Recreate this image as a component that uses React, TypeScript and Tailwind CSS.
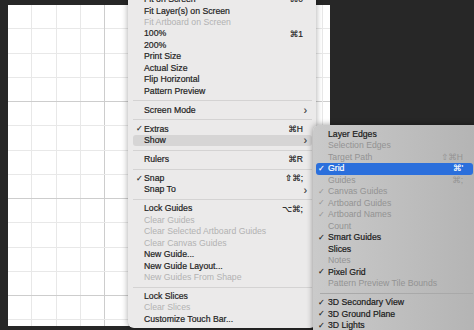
import React from "react";

type Item = {
    label: string;
    shortcut?: string;
    checked?: boolean;
    disabled?: boolean;
    submenu?: boolean;
    active?: boolean;
};

type Entry = Item | "sep";

const mainItems: Entry[] = [
    { label: "Fit on Screen", shortcut: "⌘0" },
    { label: "Fit Layer(s) on Screen" },
    { label: "Fit Artboard on Screen", disabled: true },
    { label: "100%", shortcut: "⌘1" },
    { label: "200%" },
    { label: "Print Size" },
    { label: "Actual Size" },
    { label: "Flip Horizontal" },
    { label: "Pattern Preview" },
    "sep",
    { label: "Screen Mode", submenu: true },
    "sep",
    { label: "Extras", shortcut: "⌘H", checked: true },
    { label: "Show", submenu: true, active: true },
    "sep",
    { label: "Rulers", shortcut: "⌘R" },
    "sep",
    { label: "Snap", shortcut: "⇧⌘;", checked: true },
    { label: "Snap To", submenu: true },
    "sep",
    { label: "Lock Guides", shortcut: "⌥⌘;" },
    { label: "Clear Guides", disabled: true },
    { label: "Clear Selected Artboard Guides", disabled: true },
    { label: "Clear Canvas Guides", disabled: true },
    { label: "New Guide..." },
    { label: "New Guide Layout..." },
    { label: "New Guides From Shape", disabled: true },
    "sep",
    { label: "Lock Slices" },
    { label: "Clear Slices", disabled: true },
    { label: "Customize Touch Bar..." },
];

const showItems: Entry[] = [
    { label: "Layer Edges" },
    { label: "Selection Edges", disabled: true },
    { label: "Target Path", shortcut: "⇧⌘H", disabled: true },
    { label: "Grid", shortcut: "⌘'", checked: true, active: true },
    { label: "Guides", shortcut: "⌘;", disabled: true },
    { label: "Canvas Guides", checked: true, disabled: true },
    { label: "Artboard Guides", checked: true, disabled: true },
    { label: "Artboard Names", checked: true, disabled: true },
    { label: "Count", disabled: true },
    { label: "Smart Guides", checked: true },
    { label: "Slices" },
    { label: "Notes", disabled: true },
    { label: "Pixel Grid", checked: true },
    { label: "Pattern Preview Tile Bounds", disabled: true },
    "sep",
    { label: "3D Secondary View", checked: true },
    { label: "3D Ground Plane", checked: true },
    { label: "3D Lights", checked: true },
];

const font = {
    fontFamily: '"Liberation Sans", "DejaVu Sans", sans-serif',
};

// grid drawn on the artboard: minor every 24.25px, major every 4th
const Grid: React.FC = () => {
    const step = 24.25;
    const lines = [];
    for (let i = 1; i < 14; i++) {
        const p = Math.round(i * step) - 0.5;
        const major = i % 4 === 0;
        const c = major ? "#cdcdcd" : "#e8e8e8";
        lines.push(<line key={"v" + i} x1={p} y1={0} x2={p} y2={321} stroke={c} strokeWidth={1} />);
        lines.push(<line key={"h" + i} x1={0} y1={p} x2={322} y2={p} stroke={c} strokeWidth={1} />);
    }
    return (
        <svg width="322" height="321" className="block">
            {lines}
        </svg>
    );
};

const MainRow: React.FC<{ item: Item }> = ({ item }) => (
    <div
        className={`flex h-[11.43px] items-center rounded-[3px] pl-[3px] pr-[9px] ${
            item.active ? "bg-[#d6d5d5]" : ""
        } ${item.disabled ? "text-[#b2b2b2]" : "text-[#1e1e1e] [-webkit-text-stroke:0.2px_#1e1e1e]"}`}
    >
        <span className="w-[8px] text-[8px]">{item.checked ? "✓" : ""}</span>
        <span className="flex-1 whitespace-nowrap">{item.label}</span>
        {item.shortcut && <span className="text-[8.5px]">{item.shortcut}</span>}
        {item.submenu && <span className="-mr-[4px] text-[10px] text-[#444]">›</span>}
    </div>
);

const SubRow: React.FC<{ item: Item }> = ({ item }) => (
    <div
        className={`flex h-[11.5px] items-center rounded-[3px] pl-[2px] pr-[10px] ${
            item.active
                ? "bg-[#2b6fdc] text-white [-webkit-text-stroke:0.2px_#ffffff]"
                : item.disabled
                  ? "text-[#939393]"
                  : "text-[#1a1a1a] [-webkit-text-stroke:0.2px_#1a1a1a]"
        }`}
    >
        <span className="w-[10px] text-[8px]">{item.checked ? "✓" : ""}</span>
        <span className="flex-1 whitespace-nowrap">{item.label}</span>
        {item.shortcut && <span className="text-[8.5px]">{item.shortcut}</span>}
    </div>
);

export default function App() {
    return (
        <div
            className="relative h-[330px] w-[474px] overflow-hidden bg-[#272727] text-[8.7px]"
            style={font}
        >
            <div className="pl-[8px] pt-[5px]">
                <div className="h-[321px] w-[322px] bg-white">
                    <Grid />
                </div>
            </div>

            <div className="absolute left-[128px] top-[-6px] w-[188px] rounded-b-[6px] bg-[#ebeaea] px-[5px] pb-[2.5px] pr-[4px] shadow-[0_0_6px_rgba(0,0,0,0.35)]">
                {mainItems.map((e, i) =>
                    e === "sep" ? (
                        <div key={i} className="flex h-[7.6px] items-center">
                            <div className="h-px w-full bg-[#d4d3d3]" />
                        </div>
                    ) : (
                        <MainRow key={i} item={e} />
                    ),
                )}
            </div>

            <div className="absolute left-[313px] top-[125px] w-[163px] rounded-tl-[6px] bg-gradient-to-r from-[#cacaca] to-[#b4b4b4] px-[3px] pt-[3.5px] pb-[4px] shadow-[0_0_6px_rgba(0,0,0,0.4)]">
                {showItems.map((e, i) =>
                    e === "sep" ? (
                        <div key={i} className="flex h-[7.6px] items-center pl-[4px]">
                            <div className="h-px w-full bg-[#a9a9a9]" />
                        </div>
                    ) : (
                        <SubRow key={i} item={e} />
                    ),
                )}
            </div>
        </div>
    );
}
